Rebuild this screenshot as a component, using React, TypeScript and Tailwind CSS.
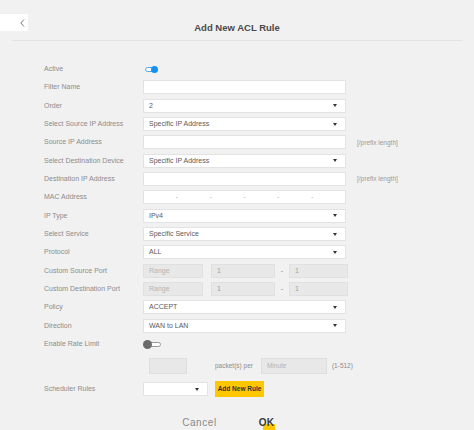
import React from 'react'

const font = { fontFamily: '"Liberation Sans", Arial, sans-serif' }

function Label({ text }: { text: string }) {
  return <div className="w-[99px] shrink-0 text-[7px] text-[#8c8c8c]">{text}</div>
}

function Arrow() {
  return <span className="w-0 h-0 border-x-[2.5px] border-x-transparent border-t-[3px] border-t-[#333]" />
}

function Input({ value = '' }: { value?: string }) {
  return (
    <div className="h-[14px] w-[203px] bg-white border border-[#e3e3e3] flex items-center px-[5px] text-[7px] text-[#5a5a5a]">
      {value}
    </div>
  )
}

function Select({ value = '', width = 'w-[203px]' }: { value?: string; width?: string }) {
  return (
    <div className={`h-[14px] ${width} bg-white border border-[#e3e3e3] flex items-center justify-between pl-[5px] pr-[8px] text-[7px] text-[#5a5a5a]`}>
      <span>{value}</span>
      <Arrow />
    </div>
  )
}

function Gray({ value, width, muted }: { value: string; width: string; muted?: boolean }) {
  return (
    <div className={`h-[14px] ${width} bg-[#e8e8e8] border border-[#e0e0e0] flex items-center px-[5px] text-[7px] ${muted ? 'text-[#b4b4b4]' : 'text-[#a0a0a0]'}`}>
      {value}
    </div>
  )
}

function Row({ children }: { children: React.ReactNode }) {
  return <div className="h-[18.33px] flex items-center">{children}</div>
}

function Prefix() {
  return <span className="ml-[11px] text-[6.5px] text-[#9a9a9a]">[/prefix length]</span>
}

function PortRow({ label }: { label: string }) {
  return (
    <Row>
      <Label text={label} />
      <div className="flex items-center">
        <Gray value="Range" width="w-[60px]" muted />
        <div className="w-[8px]" />
        <Gray value="1" width="w-[64px]" />
        <span className="w-[14px] text-center text-[7px] text-[#888]">-</span>
        <Gray value="1" width="w-[59px]" />
      </div>
    </Row>
  )
}

export default function App() {
  return (
    <div className="w-[474px] h-[430px] overflow-hidden bg-[#f1f1f1]" style={font}>
      <div className="h-[40px] flex items-start pt-[14px]">
        <div className="w-[28px] h-[17px] bg-white flex items-center justify-end pr-[3px]">
          <svg width="5" height="8" viewBox="0 0 5 8">
            <path d="M4 0.5 L0.8 4 L4 7.5" fill="none" stroke="#666" strokeWidth="0.9" />
          </svg>
        </div>
        <div className="flex-1 text-center pt-[7px] text-[9.5px] font-bold text-[#4a4a4a]">Add New ACL Rule</div>
        <div className="w-[28px]" />
      </div>
      <div className="mx-[12px] h-px bg-[#e3e3e3]" />

      <div className="pt-[19px] pl-[44px]">
        <Row>
          <Label text="Active" />
          <div className="relative w-[13px] h-[7px] ml-[2px]">
            <div className="absolute left-0 top-[1px] w-[10px] h-[5px] rounded-full bg-white border border-[#4aa8f0]" />
            <div className="absolute right-0 top-0 w-[7px] h-[7px] rounded-full bg-[#1690ee]" />
          </div>
        </Row>
        <Row>
          <Label text="Filter Name" />
          <Input />
        </Row>
        <Row>
          <Label text="Order" />
          <Select value="2" />
        </Row>
        <Row>
          <Label text="Select Source IP Address" />
          <Select value="Specific IP Address" />
        </Row>
        <Row>
          <Label text="Source IP Address" />
          <Input />
          <Prefix />
        </Row>
        <Row>
          <Label text="Select Destination Device" />
          <Select value="Specific IP Address" />
        </Row>
        <Row>
          <Label text="Destination IP Address" />
          <Input />
          <Prefix />
        </Row>
        <Row>
          <Label text="MAC Address" />
          <div className="h-[14px] w-[203px] bg-white border border-[#e3e3e3] flex items-center">
            {[0, 1, 2, 3, 4].map((i) => (
              <React.Fragment key={i}>
                <div className="flex-1" />
                <span className="text-[6px] text-[#888]">-</span>
              </React.Fragment>
            ))}
            <div className="flex-1" />
          </div>
        </Row>
        <Row>
          <Label text="IP Type" />
          <Select value="IPv4" />
        </Row>
        <Row>
          <Label text="Select Service" />
          <Select value="Specific Service" />
        </Row>
        <Row>
          <Label text="Protocol" />
          <Select value="ALL" />
        </Row>
        <PortRow label="Custom Source Port" />
        <PortRow label="Custom Destination Port" />
        <Row>
          <Label text="Policy" />
          <Select value="ACCEPT" />
        </Row>
        <Row>
          <Label text="Direction" />
          <Select value="WAN to LAN" />
        </Row>
        <Row>
          <Label text="Enable Rate Limit" />
          <div className="relative w-[18px] h-[9px]">
            <div className="absolute right-0 top-[2px] w-[14px] h-[5px] rounded-full bg-white border border-[#9a9a9a]" />
            <div className="absolute left-0 top-0 w-[9px] h-[9px] rounded-full bg-[#6b6b6b]" />
          </div>
        </Row>

        <div className="mt-[5px] flex items-center pl-[105px] text-[6.5px] text-[#8c8c8c]">
          <div className="w-[38px] h-[16px] bg-[#e8e8e8] border border-[#dedede]" />
          <span className="ml-[28px]">packet(s) per</span>
          <div className="ml-[8px] w-[66px] h-[16px] bg-[#e8e8e8] border border-[#dedede] flex items-center px-[5px] text-[#b4b4b4]">
            Minute
          </div>
          <span className="ml-[5px]">(1-512)</span>
        </div>

        <div className="mt-[7px] flex items-center">
          <Label text="Scheduler Rules" />
          <Select width="w-[65px]" />
          <div className="ml-[7px] w-[49px] h-[16px] bg-[#fec700] flex items-center justify-center text-[6.5px] font-bold text-[#333]">
            Add New Rule
          </div>
        </div>
      </div>

      <div className="mt-[18px] flex justify-center items-start">
        <span className="ml-[-18px] text-[10px] tracking-[0.6px] text-[#8a8a8a]">Cancel</span>
        <span className="relative ml-[42px] text-[10px] font-bold text-[#3a3a3a]">
          <span className="absolute left-[4px] top-[9px] w-[12px] h-[8px] bg-[#fec700]" />
          <span className="relative">OK</span>
        </span>
      </div>
    </div>
  )
}
